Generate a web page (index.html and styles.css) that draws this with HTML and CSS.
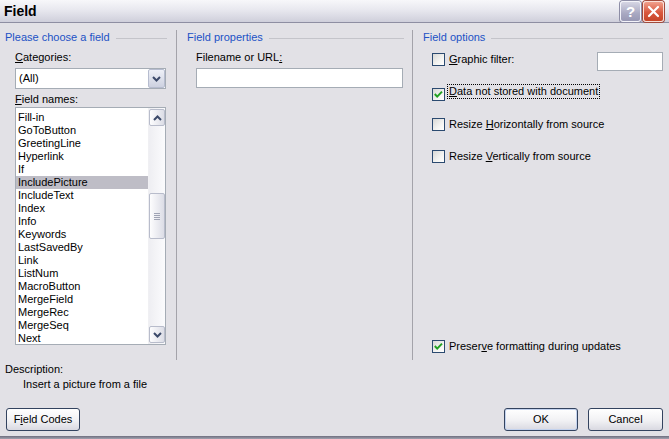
FILE: index.html
```html
<!DOCTYPE html>
<html>
<head>
<meta charset="utf-8">
<title>Field</title>
<link rel="stylesheet" href="styles.css">
</head>
<body>
<div class="window">
  <div class="titlebar">
    <span class="title">Field</span>
    <div class="caption-btns">
      <span class="cbtn help">?</span>
      <span class="cbtn close"><svg width="13" height="13" viewBox="0 0 13 13"><path d="M2 2 L11 11 M11 2 L2 11" stroke="#fff" stroke-width="2.2" stroke-linecap="round"/></svg></span>
    </div>
  </div>

  <div class="main">
    <section class="col col-left">
      <div class="group-title">Please choose a field</div>
      <div class="label lbl-cat"><u>C</u>ategories:</div>
      <div class="combo">
        <span class="combo-text">(All)</span>
        <span class="combo-btn"><svg width="9" height="6" viewBox="0 0 9 6"><polyline points="1,1 4.5,4.5 8,1" fill="none" stroke="#3c4a6a" stroke-width="2"/></svg></span>
      </div>
      <div class="label lbl-names"><u>F</u>ield names:</div>
      <div class="listbox">
        <ul class="items">
          <li>Fill-in</li>
          <li>GoToButton</li>
          <li>GreetingLine</li>
          <li>Hyperlink</li>
          <li>If</li>
          <li class="selected">IncludePicture</li>
          <li>IncludeText</li>
          <li>Index</li>
          <li>Info</li>
          <li>Keywords</li>
          <li>LastSavedBy</li>
          <li>Link</li>
          <li>ListNum</li>
          <li>MacroButton</li>
          <li>MergeField</li>
          <li>MergeRec</li>
          <li>MergeSeq</li>
          <li>Next</li>
        </ul>
        <div class="vscroll">
          <div class="sbtn"><svg width="9" height="6" viewBox="0 0 9 6"><polyline points="1,5 4.5,1.5 8,5" fill="none" stroke="#3c4a6a" stroke-width="2"/></svg></div>
          <div class="track">
            <div class="thumb"><span class="grip"></span></div>
          </div>
          <div class="sbtn"><svg width="9" height="6" viewBox="0 0 9 6"><polyline points="1,1 4.5,4.5 8,1" fill="none" stroke="#3c4a6a" stroke-width="2"/></svg></div>
        </div>
      </div>
    </section>

    <section class="col col-mid">
      <div class="group-title">Field properties</div>
      <div class="label lbl-file">Filename or URL<u>:</u></div>
      <div class="edit edit-file"></div>
    </section>

    <section class="col col-right">
      <div class="group-title">Field options</div>
      <div class="opt opt-graphic">
        <span class="cb"></span>
        <span class="opt-label"><u>G</u>raphic filter:</span>
        <span class="edit edit-filter"></span>
      </div>
      <div class="opt opt-data">
        <span class="cb checked"><svg width="11" height="11" viewBox="0 0 11 11"><path d="M1.8 5 L4.2 7.6 L9 2.6" fill="none" stroke="#21a121" stroke-width="2"/></svg></span>
        <span class="opt-label focus"><u>D</u>ata not stored with document</span>
      </div>
      <div class="opt opt-h">
        <span class="cb"></span>
        <span class="opt-label">Resize <u>H</u>orizontally from source</span>
      </div>
      <div class="opt opt-v">
        <span class="cb"></span>
        <span class="opt-label">Resize <u>V</u>ertically from source</span>
      </div>
      <div class="opt opt-preserve">
        <span class="cb checked"><svg width="11" height="11" viewBox="0 0 11 11"><path d="M1.8 5 L4.2 7.6 L9 2.6" fill="none" stroke="#21a121" stroke-width="2"/></svg></span>
        <span class="opt-label">Preser<u>v</u>e formatting during updates</span>
      </div>
    </section>
  </div>

  <div class="desc">Description:</div>
  <div class="desc-text">Insert a picture from a file</div>

  <div class="footer">
    <span class="btn btn-codes">F<u>i</u>eld Codes</span>
    <span class="btn btn-ok">OK</span>
    <span class="btn btn-cancel">Cancel</span>
  </div>
  <div class="frame-bottom"></div>
</div>
</body>
</html>
```

FILE: styles.css
```css
html, body {
  margin: 0;
  padding: 0;
}

body {
  width: 669px;
  height: 439px;
  overflow: hidden;
  font-family: "Liberation Sans", Arial, sans-serif;
  font-size: 11px;
  color: #000;
  background: #e2e1e6;
}

.window {
  display: flex;
  flex-direction: column;
  height: 439px;
}

/* ---------- title bar ---------- */
.titlebar {
  height: 22px;
  border-bottom: 1px solid #8e8ea2;
  background: linear-gradient(#f7f7fa 0%, #e8e8ef 45%, #cfcfdb 100%);
  display: flex;
  align-items: center;
  justify-content: space-between;
  padding: 0 5px 0 4px;
  flex: none;
}

.title {
  font-weight: bold;
  font-size: 14px;
  line-height: 22px;
}

.caption-btns {
  display: flex;
  gap: 2px;
}

.cbtn {
  width: 21px;
  height: 21px;
  box-sizing: border-box;
  border-radius: 3px;
  display: flex;
  align-items: center;
  justify-content: center;
}

.help {
  border: 1px solid #f4f4fa;
  background: linear-gradient(#d6d6e4, #a9a9c2 60%, #9898b4);
  color: #fff;
  font-weight: bold;
  font-size: 15px;
  box-shadow: 0 0 0 1px #8d8da6;
}

.close {
  border: 1px solid #fbe0d8;
  background: linear-gradient(#f0a08c, #d9583e 55%, #c64528);
  box-shadow: 0 0 0 1px #a04a3c;
}

/* ---------- main columns ---------- */
.main {
  display: flex;
  height: 330px;
  margin-top: 7px;
  flex: none;
}

.col {
  display: flex;
  flex-direction: column;
  box-sizing: border-box;
  height: 330px;
}

.col-left {
  width: 177px;
  border-right: 1px solid #a4a3aa;
  padding: 1px 9px 0 5px;
}

.col-mid {
  width: 236px;
  border-right: 1px solid #a4a3aa;
  padding: 1px 8px 0 10px;
}

.col-right {
  flex: 1;
  padding: 1px 6px 7px 10px;
}

.group-title {
  display: flex;
  align-items: center;
  height: 13px;
  line-height: 13px;
  color: #2151c5;
  white-space: nowrap;
}

.group-title::after {
  content: "";
  flex: 1;
  height: 1px;
  background: #c4c4ca;
  margin-left: 6px;
  margin-top: 1px;
}

.label {
  line-height: 13px;
  height: 13px;
  white-space: nowrap;
}

.lbl-cat {
  margin: 7px 0 0 10px;
}

.lbl-names {
  margin: 4px 0 0 10px;
}

.lbl-file {
  margin: 7px 0 0 9px;
}

/* ---------- combo ---------- */
.combo {
  margin: 4px 0 0 10px;
  width: 151px;
  height: 21px;
  box-sizing: border-box;
  border: 1px solid #a5acb5;
  background: #fff;
  display: flex;
  align-items: center;
  justify-content: space-between;
  padding: 0 0 0 3px;
}

.combo-text {
  line-height: 13px;
}

.combo-btn {
  width: 17px;
  height: 19px;
  box-sizing: border-box;
  border: 1px solid #b6bccf;
  border-radius: 2px;
  background: linear-gradient(#eef0f7, #cdd1e0);
  display: flex;
  align-items: center;
  justify-content: center;
}

/* ---------- list box ---------- */
.listbox {
  margin: 1px 0 0 10px;
  width: 151px;
  height: 238px;
  box-sizing: border-box;
  border: 1px solid #a5acb5;
  background: #fff;
  display: flex;
  overflow: hidden;
}

.items {
  list-style: none;
  margin: 0;
  padding: 3px 0 0 0;
  flex: 1;
  overflow: hidden;
}

.items li {
  height: 13px;
  line-height: 13px;
  padding-left: 2px;
  white-space: nowrap;
}

.items li.selected {
  background: #bebdc6;
}

.vscroll {
  width: 17px;
  flex: none;
  display: flex;
  flex-direction: column;
  background: linear-gradient(to right, #eeeef2, #fbfbfd);
  border-left: 1px solid #f0f0f3;
  box-sizing: border-box;
  padding: 1px 0;
}

.sbtn {
  height: 17px;
  box-sizing: border-box;
  border: 1px solid #b8bccb;
  border-radius: 2px;
  background: linear-gradient(to right, #fdfdfe, #dcdde6);
  display: flex;
  align-items: center;
  justify-content: center;
  flex: none;
}

.track {
  flex: 1;
}

.thumb {
  margin-top: 67px;
  height: 46px;
  box-sizing: border-box;
  border: 1px solid #b8bccb;
  border-radius: 2px;
  background: linear-gradient(to right, #fdfdfe, #dcdde6);
  display: flex;
  align-items: center;
  justify-content: center;
}

.grip {
  width: 6px;
  height: 7px;
  background: repeating-linear-gradient(#9fa3b4 0 1px, transparent 1px 2px);
}

/* ---------- edits ---------- */
.edit {
  display: block;
  box-sizing: border-box;
  border: 1px solid #a5acb5;
  background: #fff;
}

.edit-file {
  margin: 4px 0 0 9px;
  width: 207px;
  height: 20px;
}

/* ---------- options ---------- */
.opt {
  display: flex;
  margin-left: 9px;
  white-space: nowrap;
}

.cb {
  width: 13px;
  height: 13px;
  box-sizing: border-box;
  border: 1px solid #2b4a70;
  background: linear-gradient(135deg, #d8d8d6 0%, #f4f4f2 60%, #ffffff 100%);
  display: flex;
  align-items: center;
  justify-content: center;
  flex: none;
}

.opt-label {
  line-height: 13px;
  margin-left: 4px;
}

.opt-graphic {
  margin-top: 8px;
  align-items: flex-start;
}

.opt-graphic .cb,
.opt-graphic .opt-label {
  margin-top: 1px;
}

.edit-filter {
  margin-left: auto;
  width: 66px;
  height: 19px;
}

.opt-data {
  margin-top: 13px;
  align-items: flex-start;
}

.opt-data .cb {
  margin-top: 4px;
}

.opt-label.focus {
  border: 1px dotted #000;
  padding: 0 1px;
  margin-left: 2px;
}

.opt-h {
  margin-top: 17px;
  align-items: center;
  height: 13px;
}

.opt-v {
  margin-top: 19px;
  align-items: center;
  height: 13px;
}

.opt-preserve {
  margin-top: auto;
  align-items: center;
  height: 13px;
}

/* ---------- description ---------- */
.desc {
  margin: 3px 0 0 5px;
  line-height: 13px;
  height: 13px;
}

.desc-text {
  margin: 2px 0 0 23px;
  line-height: 13px;
  height: 13px;
}

/* ---------- footer buttons ---------- */
.footer {
  display: flex;
  margin-top: 17px;
  padding: 0 6px;
  height: 23px;
  flex: none;
}

.btn {
  height: 23px;
  box-sizing: border-box;
  border: 1px solid #33435f;
  border-radius: 3px;
  background: linear-gradient(#ffffff 0%, #f1f1f4 55%, #d9d9e1 100%);
  display: flex;
  align-items: center;
  justify-content: center;
  line-height: 13px;
}

.btn-codes {
  width: 74px;
}

.btn-ok {
  margin-left: auto;
  width: 74px;
  box-shadow: inset 0 0 0 1px #c3d2ee;
}

.btn-cancel {
  margin-left: 10px;
  width: 75px;
}

.frame-bottom {
  margin-top: auto;
  height: 3px;
  background: linear-gradient(#6e6e7e, #a2a2b0);
  flex: none;
}
```
